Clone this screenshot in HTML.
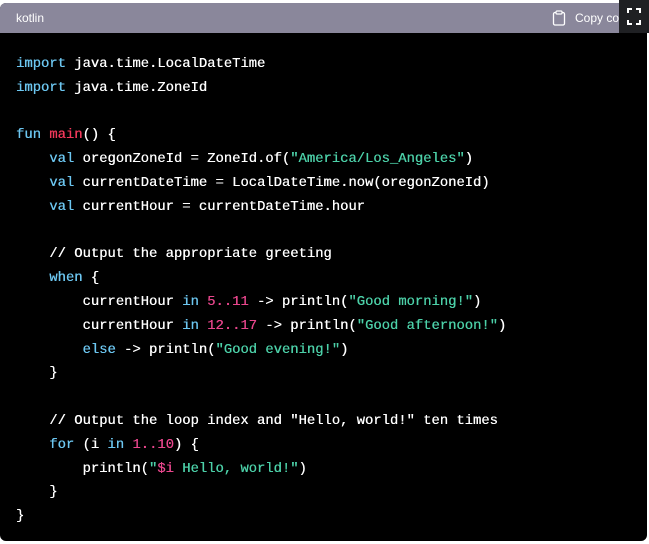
<!DOCTYPE html>
<html><head><style>
body{margin:0;background:#fff;width:649px;height:544px;overflow:hidden;position:relative}
.box{position:absolute;left:0;top:3px;width:647px;height:538px;background:#000;border-radius:6px;overflow:hidden}
.hdr{height:30px;background:#8a879b;color:#fff;font:12px "Liberation Sans",sans-serif;position:relative}
.hdr .l{position:absolute;left:16px;top:8px}
.hdr .c{position:absolute;left:575px;top:8px}
.exp{position:absolute;left:619px;top:0;width:30px;height:33px;background:#1f2023}
pre{margin:0;position:absolute;left:16px;top:50px;font:13.85px/23.8px "Liberation Mono",monospace;color:#fff;text-shadow:0.3px 0 0 currentColor}
.k{color:#6cc6f0}.f{color:#f2385a}.n{color:#e8468c}.s{color:#4cd0a8}
</style></head><body>
<div class="box"><div class="hdr"><span class="l">kotlin</span>
<svg style="position:absolute;left:552px;top:7px" width="14" height="16" viewBox="0 0 14 16"><rect x="1.5" y="2.5" width="11" height="12.5" rx="1.5" fill="none" stroke="#fff" stroke-width="1.3"/><rect x="4" y="1" width="6" height="3" rx="1" fill="#8a879b" stroke="#fff" stroke-width="1.2"/></svg>
<span class="c">Copy co</span></div>
<pre><span class="k">import</span> java.time.LocalDateTime
<span class="k">import</span> java.time.ZoneId

<span class="k">fun</span> <span class="f">main</span>() {
    <span class="k">val</span> oregonZoneId = ZoneId.of(<span class="s">"America/Los_Angeles"</span>)
    <span class="k">val</span> currentDateTime = LocalDateTime.now(oregonZoneId)
    <span class="k">val</span> currentHour = currentDateTime.hour

    // Output the appropriate greeting
    <span class="k">when</span> {
        currentHour <span class="k">in</span> <span class="n">5..11</span> -&gt; println(<span class="s">"Good morning!"</span>)
        currentHour <span class="k">in</span> <span class="n">12..17</span> -&gt; println(<span class="s">"Good afternoon!"</span>)
        <span class="k">else</span> -&gt; println(<span class="s">"Good evening!"</span>)
    }

    // Output the loop index and "Hello, world!" ten times
    <span class="k">for</span> (i <span class="k">in</span> <span class="n">1..10</span>) {
        println(<span class="s">"<span class="n">$i</span> Hello, world!"</span>)
    }
}</pre></div>
<div class="exp"><svg width="30" height="33" viewBox="0 0 30 33"><path d="M9 13V9h4M17 9h4v4M21 20v4h-4M13 24H9v-4" fill="none" stroke="#fff" stroke-width="2"/></svg></div>
</body></html>
